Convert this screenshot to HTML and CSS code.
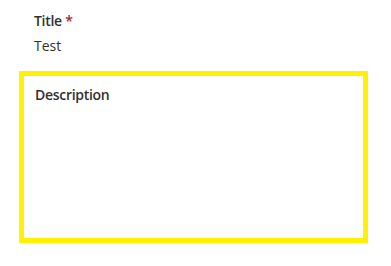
FILE: index.html
```html
<!DOCTYPE html>
<html lang="en">
<head>
    <meta charset="UTF-8">
    <title>Form</title>
    <link rel="stylesheet" href="styles.css">
</head>
<body>
    <div class="form">
        <div class="field">
            <label class="label">Title <span class="required">*</span></label>
            <div class="value">Test</div>
        </div>
        <div class="field highlight">
            <label class="label">Description</label>
        </div>
    </div>
</body>
</html>
```

FILE: styles.css
```css
html, body {
    margin: 0;
    background: #ffffff;
}

body {
    font-family: "Open Sans", "Noto Sans", sans-serif;
    font-size: 14px;
    color: #323130;
}

.form {
    padding: 11px 0 0 19px;
    width: 349px;
}

.field {
    padding: 0 0 0 15px;
}

.label {
    display: block;
    font-weight: 600;
    line-height: 20px;
    letter-spacing: -0.3px;
}

.required {
    color: #a4262c;
}

.value {
    line-height: 20px;
    margin-top: 5px;
}

/* 高亮框 */
.highlight {
    margin-top: 15px;
    border: 5px solid #fff100;
    padding: 9px 0 0 11px;
    box-sizing: border-box;
    height: 172px;
}
```
